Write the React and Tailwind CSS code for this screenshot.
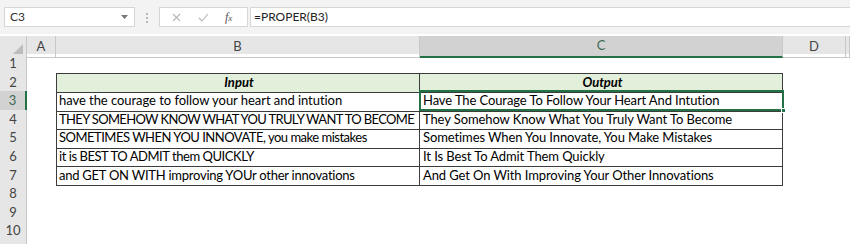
import { useState } from "react";

const FONT = { fontFamily: "Lato, 'Open Sans', sans-serif" };

// input text, output text, tracking for the input cell (Lato caps run wider than Calibri's)
const ROWS = [
  ["have the courage to follow your heart and intution", "Have The Courage To Follow Your Heart And Intution", "tracking-[-0.05px]"],
  ["THEY SOMEHOW KNOW WHAT YOU TRULY WANT TO BECOME", "They Somehow Know What You Truly Want To Become", "tracking-[-0.65px]"],
  ["SOMETIMES WHEN YOU INNOVATE, you make mistakes", "Sometimes When You Innovate, You Make Mistakes", "tracking-[-0.5px]"],
  ["it is BEST TO ADMIT them QUICKLY", "It Is Best To Admit Them Quickly", "tracking-[-0.45px]"],
  ["and GET ON WITH improving YOUr other innovations", "And Get On With Improving Your Other Innovations", "tracking-[-0.25px]"],
];

const GRID = "grid grid-cols-[27px_29px_364px_363px_63px_1fr]";

function FormulaBar() {
  return (
    <div className="flex h-[34px] items-start bg-[#f3f3f3] pt-[7px]">
      {/* name box */}
      <div className="ml-[4px] flex h-[20px] w-[131px] items-center justify-between border border-[#d6d6d6] bg-white pl-[5px] pr-[6px] text-[12px] text-[#333]">
        <span>C3</span>
        <svg width="7" height="4" viewBox="0 0 7 4">
          <path d="M0 0h7L3.5 4z" fill="#777" />
        </svg>
      </div>
      <div className="ml-[11px] mt-[6px] flex flex-col gap-[2px]">
        <span className="h-[2px] w-[2px] bg-[#b8b8b8]" />
        <span className="h-[2px] w-[2px] bg-[#b8b8b8]" />
        <span className="h-[2px] w-[2px] bg-[#b8b8b8]" />
      </div>
      {/* cancel / enter / fx */}
      <div className="ml-[11px] flex h-[20px] w-[89px] items-center border border-[#d6d6d6] bg-white">
        <svg className="ml-[12px]" width="9" height="9" viewBox="0 0 9 9">
          <path d="M1 1l7 7M8 1L1 8" stroke="#b5b5b5" strokeWidth="1.1" />
        </svg>
        <svg className="ml-[17px]" width="11" height="9" viewBox="0 0 11 9">
          <path d="M1 5l3 3 6-7" stroke="#b5b5b5" strokeWidth="1.1" fill="none" />
        </svg>
        <span
          className="ml-[16px] text-[12px] italic text-[#555]"
          style={{ fontFamily: "'Liberation Serif', serif" }}
        >
          f<span className="text-[9px]">x</span>
        </span>
      </div>
      <div className="ml-[2px] flex h-[20px] flex-1 items-center border-y border-l border-[#d6d6d6] bg-white pl-[3px] text-[12px] text-[#222]">
        =PROPER(B3)
      </div>
    </div>
  );
}

function ColumnHeaders() {
  const cols = [
    { k: "A" },
    { k: "B" },
    { k: "C", active: true },
    { k: "D" },
    { k: "" },
  ];
  return (
    <div className={`${GRID} mt-[2px] h-[18px] bg-[#e6e6e6] text-[13px] text-[#444]`}>
      <div className="relative border-r border-b border-[#c8c8c8]">
        <svg className="absolute bottom-[2px] right-[3px]" width="11" height="11" viewBox="0 0 11 11">
          <path d="M11 0v11H0z" fill="#bdbdbd" />
        </svg>
      </div>
      {cols.map((c, i) => (
        <div
          key={i}
          className={`flex items-center justify-center border-r border-[#c8c8c8] ${
            c.active
              ? "border-b-2 border-b-[#217346] bg-[#d2d2d2] text-[#3d6b52]"
              : "border-b border-b-[#c8c8c8]"
          }`}
        >
          {c.k}
        </div>
      ))}
    </div>
  );
}

function RowHeader({ n, active }) {
  return (
    <div
      className={`flex items-center justify-center border-b border-[#c8c8c8] text-[13px] ${
        active
          ? "border-r-2 border-r-[#217346] bg-[#d2d2d2] text-[#3d6b52]"
          : "border-r border-r-[#c8c8c8] bg-[#e6e6e6] text-[#444]"
      }`}
    >
      {n}
    </div>
  );
}

export default function App() {
  const [selected] = useState({ row: 3, col: "C" });

  const lines = [];
  for (let r = 1; r <= 11; r++) {
    const dataRow = r >= 3 && r <= 7 ? ROWS[r - 3] : null;
    const isHead = r === 2;
    const inTable = isHead || dataRow;
    lines.push(
      <div key={r} className={`${GRID} h-[18.6px]`}>
        <RowHeader n={r <= 10 ? r : ""} active={r === selected.row} />
        <div />
        {inTable ? (
          <>
            <div
              className={`flex items-center overflow-hidden whitespace-nowrap border-x border-b border-[#3c3c3c] pl-[2px] text-[13px] text-black ${
                isHead ? "justify-center border-t bg-[#e2efda] font-bold italic" : dataRow[2]
              }`}
            >
              {isHead ? "Input" : dataRow[0]}
            </div>
            <div
              className={`relative flex items-center overflow-hidden whitespace-nowrap border-r border-b border-[#3c3c3c] pl-[3px] text-[13px] tracking-[-0.1px] text-black ${
                isHead ? "justify-center border-t bg-[#e2efda] font-bold italic" : ""
              }`}
            >
              {isHead ? "Output" : dataRow[1]}
            </div>
          </>
        ) : (
          <>
            <div />
            <div />
          </>
        )}
        <div />
        <div />
      </div>
    );
  }

  return (
    <div className="h-[244px] w-[850px] overflow-hidden bg-white" style={FONT}>
      <FormulaBar />
      <ColumnHeaders />
      <div className="relative">
        {lines}
        {/* active cell C3 */}
        <div className="pointer-events-none absolute left-[419px] top-[36.2px] h-[20.6px] w-[365px] border-2 border-[#217346]">
          <span className="absolute -bottom-[4px] -right-[4px] h-[5px] w-[5px] border border-white bg-[#217346]" />
        </div>
      </div>
    </div>
  );
}
